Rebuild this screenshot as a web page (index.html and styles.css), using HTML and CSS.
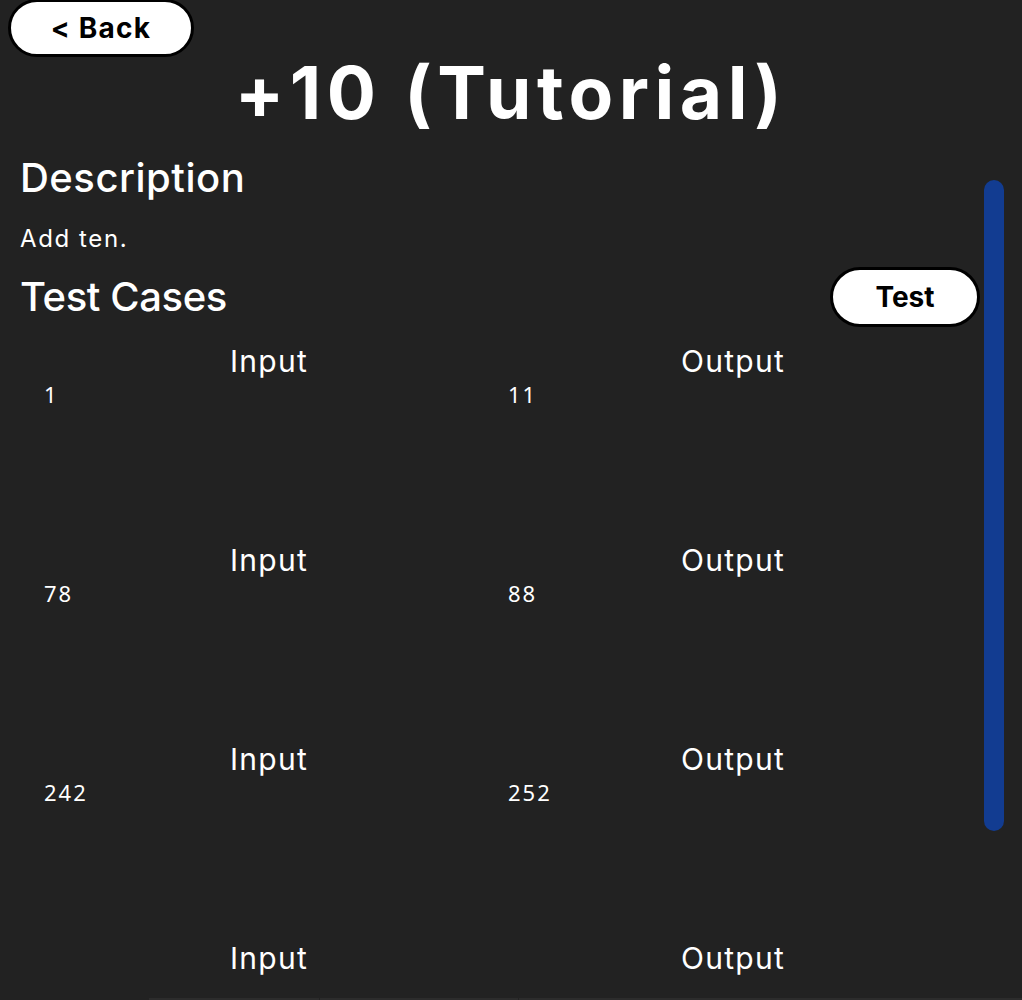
FILE: index.html
```html
<!DOCTYPE html>
<html>
<head>
<meta charset="utf-8">
<link rel="stylesheet" href="styles.css">
</head>
<body>
<div class="page">
  <header class="top">
    <button class="pill back">&lt; Back</button>
    <h1 class="title">+10 (Tutorial)</h1>
  </header>
  <div class="scroller">
    <main class="content">
      <h2 class="heading desc-head">Description</h2>
      <p class="desc">Add ten.</p>
      <div class="cases-head">
        <h2 class="heading cases-title">Test Cases</h2>
        <button class="pill test">Test</button>
      </div>
      <div class="cases">
        <div class="cell"><div class="label">Input</div><div class="num">1</div></div>
        <div class="cell"><div class="label">Output</div><div class="num">11</div></div>
        <div class="cell"><div class="label">Input</div><div class="num">78</div></div>
        <div class="cell"><div class="label">Output</div><div class="num">88</div></div>
        <div class="cell"><div class="label">Input</div><div class="num">242</div></div>
        <div class="cell"><div class="label">Output</div><div class="num">252</div></div>
        <div class="cell"><div class="label">Input</div><div class="num"></div></div>
        <div class="cell"><div class="label">Output</div><div class="num"></div></div>
      </div>
    </main>
    <div class="track"><div class="thumb"></div></div>
  </div>
  <div class="dock">
    <div class="dock-seg seg1"></div>
    <div class="dock-seg seg2"></div>
    <div class="dock-seg seg3"></div>
  </div>
</div>
</body>
</html>
```

FILE: styles.css
```css
html, body {
  margin: 0;
  padding: 0;
  background: #222222;
}
.page {
  position: relative;
  width: 1022px;
  height: 1000px;
  overflow: hidden;
  background: #222222;
  color: #ffffff;
  font-family: Inter, "Noto Sans", sans-serif;
}
.top {
  display: flex;
  flex-direction: column;
}
.pill {
  box-sizing: border-box;
  background: #ffffff;
  color: #000000;
  border: 3px solid #000000;
  font-family: Inter, "Noto Sans", sans-serif;
  font-weight: 700;
  font-size: 28px;
  padding: 0;
  display: flex;
  align-items: center;
  justify-content: center;
}
.back {
  margin-left: 8px;
  width: 186px;
  height: 58px;
  border-radius: 29px;
  margin-top: -1px;
  letter-spacing: 1.2px;
}
.title {
  margin: -4px 0 0 0;
  text-align: center;
  font-size: 73px;
  line-height: 80px;
  font-weight: 700;
  letter-spacing: 5.5px;
}
.scroller {
  display: flex;
}
.content {
  flex: 1;
  padding: 0 4px 0 20px;
}
.heading {
  margin: 0;
  font-size: 40px;
  line-height: 48px;
  font-weight: 500;
}
.desc-head {
  margin-top: 21px;
  letter-spacing: 0.5px;
}
.cases-title {
  letter-spacing: -0.4px;
}
.desc {
  margin: 22px 0 0 0;
  font-size: 24px;
  line-height: 30px;
  letter-spacing: 1.6px;
}
.cases-head {
  margin-top: 13px;
  display: flex;
  align-items: center;
  justify-content: space-between;
}
.test {
  width: 150px;
  height: 60px;
  border-radius: 30px;
}
.cases {
  margin: 16px 0 0 17px;
  width: 928px;
  display: grid;
  grid-template-columns: 1fr 1fr;
}
.cell {
  height: 199px;
}
.label {
  text-align: center;
  font-size: 30px;
  line-height: 36px;
  letter-spacing: 1.3px;
}
.num {
  font-family: "Noto Sans", sans-serif;
  font-size: 22px;
  line-height: 30px;
  letter-spacing: 2px;
  padding-left: 7px;
  height: 30px;
}
.track {
  width: 20px;
  margin: 47px 18px 0 0;
}
.thumb {
  height: 651px;
  background: #123c91;
  border-radius: 10px;
}
.dock {
  position: absolute;
  top: 998px;
  left: 149px;
  right: 0;
  height: 2px;
  display: flex;
  gap: 1px;
}
.dock-seg {
  background: #2c2c2c;
  height: 2px;
}
.seg1 { width: 170px; }
.seg2 { width: 198px; }
.seg3 { flex: 1; }
```
